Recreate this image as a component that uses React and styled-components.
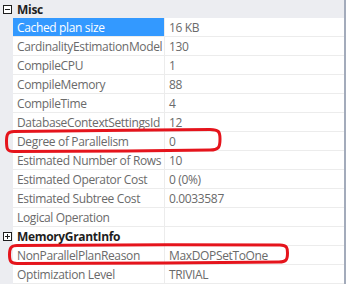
import React from "react";
import styled, { createGlobalStyle } from "styled-components";

const Global = createGlobalStyle`
  html, body { margin: 0; padding: 0; background: #ffffff; }
  body { font-family: "Open Sans", "Noto Sans", sans-serif; }
`;

const Stage = styled.div`
  position: relative;
  width: 348px;
  height: 294px;
  background: #fff;
`;

const Grid = styled.div`
  width: 344px;
  border-right: 2px solid #a3abbb;
  display: flex;
  flex-direction: column;
`;

const Row = styled.div`
  display: flex;
  height: ${(p) => (p.$header ? 18 : 19)}px;
  background: ${(p) => (p.$header ? "#ecedf1" : "#ffffff")};
`;

const Gutter = styled.div`
  width: 13px;
  flex: none;
  background: #ecedf1;
  display: flex;
  align-items: center;
  justify-content: center;
`;

const ToggleBox = styled.div`
  width: 7px;
  height: 7px;
  border: 1px solid #1e1e1e;
  position: relative;
  background: #fff;
  margin-left: 2px;
  &::before {
    content: "";
    position: absolute;
    left: 1px;
    top: 3px;
    width: 5px;
    height: 1px;
    background: #1e1e1e;
  }
  &::after {
    content: "";
    display: ${(p) => (p.$plus ? "block" : "none")};
    position: absolute;
    left: 3px;
    top: 1px;
    width: 1px;
    height: 5px;
    background: #1e1e1e;
  }
`;

const HeaderLabel = styled.div`
  flex: 1;
  display: flex;
  align-items: center;
  padding-left: 4px;
  font-size: 12px;
  font-weight: 700;
  color: #1e1e1e;
  letter-spacing: -0.3px;
`;

const NameCell = styled.div`
  width: 152px;
  flex: none;
  box-sizing: border-box;
  padding-left: 4px;
  display: flex;
  align-items: center;
  font-size: 12px;
  letter-spacing: -0.35px;
  white-space: nowrap;
  overflow: hidden;
  border-right: 1px solid #ececec;
  border-bottom: 1px solid #ececec;
  background: ${(p) => (p.$selected ? "#3399ff" : "#ffffff")};
  color: ${(p) => (p.$selected ? "#ffffff" : p.$bold ? "#1e1e1e" : "#6a6a6a")};
  font-weight: ${(p) => (p.$bold ? 700 : 400)};
`;

const ValueCell = styled.div`
  flex: 1;
  box-sizing: border-box;
  padding-left: 4px;
  display: flex;
  align-items: center;
  font-size: 12px;
  letter-spacing: -0.35px;
  color: #6a6a6a;
  white-space: nowrap;
  border-bottom: 1px solid #ececec;
`;

const Marks = styled.svg`
  position: absolute;
  left: 0;
  top: 0;
  pointer-events: none;
`;

const rows = [
  { name: "Cached plan size", value: "16 KB", selected: true },
  { name: "CardinalityEstimationModel", value: "130" },
  { name: "CompileCPU", value: "1" },
  { name: "CompileMemory", value: "88" },
  { name: "CompileTime", value: "4" },
  { name: "DatabaseContextSettingsId", value: "12" },
  { name: "Degree of Parallelism", value: "0" },
  { name: "Estimated Number of Rows", value: "10" },
  { name: "Estimated Operator Cost", value: "0 (0%)" },
  { name: "Estimated Subtree Cost", value: "0.0033587" },
  { name: "Logical Operation", value: "" },
  { name: "MemoryGrantInfo", value: "", expandable: true },
  { name: "NonParallelPlanReason", value: "MaxDOPSetToOne" },
  { name: "Optimization Level", value: "TRIVIAL" },
];

export default function App() {
  return (
    <Stage>
      <Global />
      <Grid>
        <Row $header>
          <Gutter>
            <ToggleBox />
          </Gutter>
          <HeaderLabel>Misc</HeaderLabel>
        </Row>
        {rows.map((r) => (
          <Row key={r.name}>
            <Gutter>{r.expandable && <ToggleBox $plus />}</Gutter>
            <NameCell $selected={r.selected} $bold={r.expandable}>
              {r.name}
            </NameCell>
            <ValueCell>{r.value}</ValueCell>
          </Row>
        ))}
      </Grid>
      <Marks width="348" height="294" viewBox="0 0 348 294">
        <path
          d="M14 131.5 C60 130.5 150 130 210 129.5 C219 129.5 220 132 220 139 C220 147 219 150 210 150 C150 151 60 151.5 14 151.5 C7 151.5 6.5 149 6.5 141 C6.5 134 8 131.5 14 131.5 Z"
          fill="none"
          stroke="#e5141c"
          strokeWidth="3"
        />
        <path
          d="M17 245.5 C80 245 200 244.5 280 245 C287 245 287.5 248 287.5 253 C287.5 260 286 262 279 262 C200 263 80 263.5 17 263.5 C10.5 263.5 9.5 261 9.5 254.5 C9.5 248 11 245.5 17 245.5 Z"
          fill="none"
          stroke="#e5141c"
          strokeWidth="3"
        />
      </Marks>
    </Stage>
  );
}
